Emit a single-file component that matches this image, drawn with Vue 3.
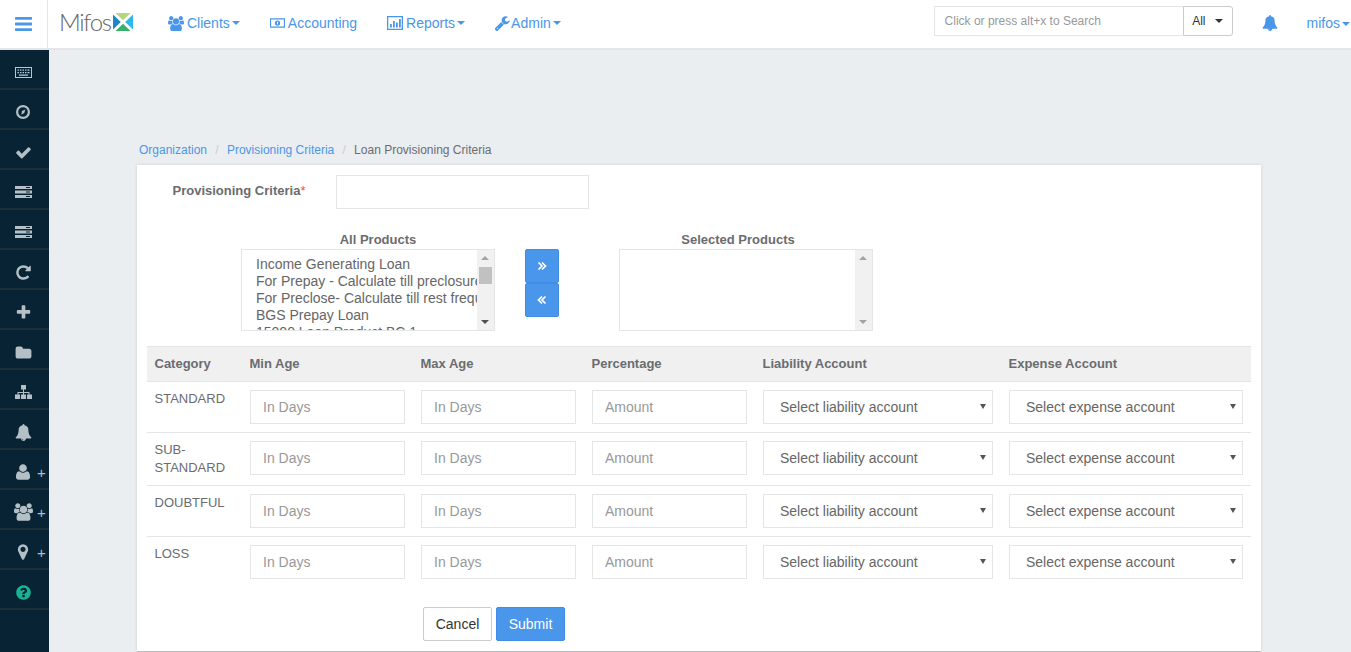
<script setup>
const P = {
  bars: 'M1664 1344v128q0 26-19 45t-45 19H192q-26 0-45-19t-19-45v-128q0-26 19-45t45-19h1408q26 0 45 19t19 45zm0-512v128q0 26-19 45t-45 19H192q-26 0-45-19t-19-45V832q0-26 19-45t45-19h1408q26 0 45 19t19 45zm0-512v128q0 26-19 45t-45 19H192q-26 0-45-19t-19-45V320q0-26 19-45t45-19h1408q26 0 45 19t19 45z',
  check: 'M1671 566q0 40-28 68l-724 724-136 136q-28 28-68 28t-68-28l-136-136-362-362q-28-28-28-68t28-68l136-136q28-28 68-28t68 28l294 295 656-657q28-28 68-28t68 28l136 136q28 28 28 68z',
  plus: 'M1600 736v192q0 40-28 68t-68 28h-416v416q0 40-28 68t-68 28H800q-40 0-68-28t-28-68v-416H288q-40 0-68-28t-28-68V736q0-40 28-68t68-28h416V224q0-40 28-68t68-28h192q40 0 68 28t28 68v416h416q40 0 68 28t28 68z',
  folder: 'M1728 608v704q0 92-66 158t-158 66H288q-92 0-158-66t-66-158V480q0-92 66-158t158-66h320q92 0 158 66t66 158v32h672q92 0 158 66t66 158z',
  bell: 'M912 1696q0-16-16-16-59 0-101.5-42.5T752 1536q0-16-16-16t-16 16q0 73 51.5 124.5T896 1712q16 0 16-16zm816-288q0 52-38 90t-90 38h-448q0 106-75 181t-181 75-181-75-75-181H192q-52 0-90-38t-38-90q50-42 91-88t85-119.5 74.5-158.5 50-206T384 576q0-152 117-282.5T808 135q-8-19-8-39 0-40 28-68t68-28 68 28 28 68q0 20-8 39 190 28 307 158.5T1408 576q0 139 19.5 260t50 206 74.5 158.5 85 119.5 91 88z',
  user: 'M1600 1405q0 120-73 189.5t-194 69.5H459q-121 0-194-69.5T192 1405q0-53 3.5-103.5t14-109T236 1084t43-97.5 62-81 85.5-53.5T538 832q9 0 42 21.5t74.5 48 108 48T896 971t133.5-21.5 108-48 74.5-48 42-21.5q61 0 111.5 20t85.5 53.5 62 81 43 97.5 26.5 108.5 14 109 3.5 103.5zm-320-893q0 159-112.5 271.5T896 896 624.5 783.5 512 512t112.5-271.5T896 128t271.5 112.5T1280 512z',
  users: 'M593 896q-162 5-265 128H194q-82 0-138-40.5T0 865q0-353 124-353 6 0 43.5 21t97.5 42.5T384 597q67 0 133-23-5 37-5 66 0 139 81 256zm1071 637q0 120-73 189.5t-194 69.5H523q-121 0-194-69.5T256 1533q0-53 3.5-103.5t14-109T300 1212t43-97.5 62-81 85.5-53.5T602 960q10 0 43 21.5t73 48 107 48 135 21.5 135-21.5 107-48 73-48 43-21.5q61 0 111.5 20t85.5 53.5 62 81 43 97.5 26.5 108.5 14 109 3.5 103.5zM640 256q0 106-75 181t-181 75-181-75-75-181 75-181T384 0t181 75 75 181zm704 384q0 159-112.5 271.5T960 1024 688.5 911.5 576 640t112.5-271.5T960 256t271.5 112.5T1344 640zm576 225q0 78-56 118.5t-138 40.5h-134q-103-123-265-128 81-117 81-256 0-29-5-66 66 23 133 23 59 0 119-21.5t97.5-42.5 43.5-21q124 0 124 353zm-128-609q0 106-75 181t-181 75-181-75-75-181 75-181 181-75 181 75 75 181z',
  wrench: 'M448 1472q0-26-19-45t-45-19-45 19-19 45 19 45 45 19 45-19 19-45zm644-420l-682 682q-37 37-90 37-52 0-91-37l-106-108q-38-36-38-90 0-53 38-91l681-681q39 98 114.5 173.5T1092 1052zm634-435q0 39-23 106-47 134-164.5 217.5T1280 1024q-185 0-316.5-131.5T832 576t131.5-316.5T1280 128q58 0 121.5 16.5T1509 191q16 11 16 28t-16 28l-293 169v224l193 107q5-3 79-48.5t135.5-81 70.5-35.5q15 0 23.5 10t8.5 25z',
  repeat: 'M1664 256v448q0 26-19 45t-45 19h-448q-42 0-59-40-17-39 14-69l138-138q-148-137-349-137-104 0-198.5 40.5T534 534 425.5 697.5 385 896t40.5 198.5T534 1258t163.5 108.5T896 1407q119 0 225-52t179-147q7-10 23-12 15 0 25 9l137 138q9 8 9.5 20.5t-7.5 22.5q-109 132-264 204.5T896 1664q-156 0-298-61t-245-164-164-245-61-298 61-298 164-245 245-164 298-61q147 0 284.5 55.5T1425 340l130-129q29-31 70-14 39 17 39 59z',
  marker: 'M1152 640q0-106-75-181t-181-75-181 75-75 181 75 181 181 75 181-75 75-181zm256 0q0 109-33 179l-364 774q-16 33-47.5 52t-67.5 19-67.5-19-46.5-52L417 819q-33-70-33-179 0-212 150-362t362-150 362 150 150 362z',
  question: 'M1024 1376v-192q0-14-9-23t-23-9H800q-14 0-23 9t-9 23v192q0 14 9 23t23 9h192q14 0 23-9t9-23zm256-672q0-88-55.5-163T1086 425t-170-41q-243 0-371 213-15 24 8 42l132 100q7 6 19 6 16 0 25-12 53-68 86-92 34-24 86-24 48 0 85.5 26t37.5 59q0 38-20 61t-68 45q-63 28-115.5 86.5T768 1020v36q0 14 9 23t23 9h192q14 0 23-9t9-23q0-19 21.5-49.5T1100 957q32-18 49-28.5t46-35 44.5-48 28-60.5 12.5-81zm384 192q0 209-103 385.5T1281.5 1561 896 1664t-385.5-103T231 1281.5 128 896t103-385.5T510.5 231 896 128t385.5 103T1561 510.5 1664 896z',
  keyboard: 'M0 0h17v11H0zM1 1v9h15V1zM2.500 2.500h1.500v1.200h-1.500zM5 2.500h1.500v1.200H5zM7.500 2.500H9v1.200H7.500zM10 2.500h1.500v1.200H10zM12.500 2.500h2v1.200h-2zM2.500 5h1.500v1.200h-1.500zM5 5h1.500v1.200H5zM7.500 5H9v1.200H7.500zM10 5h1.500v1.200H10zM12.500 5h2v1.200h-2zM4 7.500h9v1.200H4z',
  server: 'M0 0h17v3H0zM11 1v1h4V1zM0 4.500h17v3H0zM11 5.500v1h4v-1zM0 9h17v3H0zM11 10v1h4v-1z',
  compass: 'M7 0a7 7 0 1 0 0 14A7 7 0 0 0 7 0zM7 2.200a4.800 4.800 0 1 1 0 9.600 4.800 4.800 0 0 1 0-9.600zM9.400 4.400L8.200 8 5.400 9.800 5.900 6z',
  sitemap: 'M6 0h5v4.500H6zM8 4.500h1V7h5.500v2.500h-1V8H9v1.500H8V8H3.500v1.500h-1V7H8zM0 9.500h5V14H0zM6 9.500h5V14H6zM12 9.500h5V14h-5z',
  money: 'M0 0h16v10H0zM1.200 1.200v7.600h13.600V1.200zM8 2.200a2.800 2.800 0 1 1 0 5.600 2.800 2.800 0 0 1 0-5.600zM7.400 3.600v2.800h1.200V3.600z',
  chart: 'M0 0h16v14H0zM1.300 1.300v11.400h13.400V1.300zM3 8h1.800v3.500H3zM6 5h1.800v6.500H6zM9 6.500h1.800v5H9zM12 3h1.800v8.500H12z',
}
const fa = '0 0 1792 1792'
const side = [
  { p: P.keyboard, vb: '0 0 17 11', w: 17, h: 11, tint: true },
  { p: P.compass, vb: '0 0 14 14', w: 14, h: 14 },
  { p: P.check, vb: fa, w: 17, h: 17 },
  { p: P.server, vb: '0 0 17 12', w: 17, h: 12 },
  { p: P.server, vb: '0 0 17 12', w: 17, h: 12 },
  { p: P.repeat, vb: fa, w: 17, h: 17 },
  { p: P.plus, vb: fa, w: 17, h: 17 },
  { p: P.folder, vb: fa, w: 17, h: 17 },
  { p: P.sitemap, vb: '0 0 17 14', w: 17, h: 14 },
  { p: P.bell, vb: fa, w: 17, h: 17 },
  { p: P.user, vb: fa, w: 18, h: 18, more: true },
  { p: P.users, vb: '0 0 1920 1792', w: 19, h: 18, more: true },
  { p: P.marker, vb: fa, w: 18, h: 18, more: true },
  { p: P.question, vb: fa, w: 17, h: 17, help: true },
]
const nav = [
  { label: 'Clients', p: P.users, vb: '0 0 1920 1792', w: 16, h: 15, caret: true },
  { label: 'Accounting', p: P.money, vb: '0 0 16 10', w: 15, h: 10 },
  { label: 'Reports', p: P.chart, vb: '0 0 16 14', w: 16, h: 14, caret: true },
  { label: 'Admin', p: P.wrench, vb: '100 100 1664 1664', w: 15, h: 15, caret: true, tight: true },
]
const products = [
  'Income Generating Loan',
  'For Prepay - Calculate till preclosure date',
  'For Preclose- Calculate till rest frequency date',
  'BGS Prepay Loan',
  '15000 Loan Product BC 1',
]
const rows = ['STANDARD', 'SUB-STANDARD', 'DOUBTFUL', 'LOSS']
const heads = ['Category', 'Min Age', 'Max Age', 'Percentage', 'Liability Account', 'Expense Account']
</script>

<template>
  <div class="page">
    <header class="topbar">
      <div class="burger">
        <svg viewBox="128 256 1536 1280" preserveAspectRatio="none"><path :d="P.bars" /></svg>
      </div>
      <div class="logo">
        <span class="logo-text">Mifos</span>
        <svg class="logo-mark" width="20" height="18" viewBox="0 0 20 18">
          <polygon points="2.500,0 17.500,0 10,7.200" fill="#b3d77e" />
          <polygon points="0,1.500 0,16.500 7.800,9" fill="#1f86c9" />
          <polygon points="20,1.500 20,16.500 12.200,9" fill="#2cb7ee" />
          <polygon points="2.500,18 17.500,18 10,10.800" fill="#37b26c" />
        </svg>
      </div>
      <nav class="nav">
        <a v-for="n in nav" :key="n.label" class="nav-link">
          <svg :class="{ tight: n.tight }" :width="n.w" :height="n.h" :viewBox="n.vb"><path :d="n.p" fill-rule="evenodd" /></svg>
          <span>{{ n.label }}</span>
          <i v-if="n.caret" class="caret"></i>
        </a>
      </nav>
      <div class="search">
        <input class="search-input" placeholder="Click or press alt+x to Search" />
        <button class="search-btn">All <i class="caret dark"></i></button>
      </div>
      <svg class="top-bell" width="16" height="16" viewBox="0 0 1792 1792"><path :d="P.bell" /></svg>
      <a class="user-link">mifos<i class="caret"></i></a>
    </header>

    <div class="body">
      <aside class="sidebar">
        <div v-for="(s, i) in side" :key="i" class="side-item">
          <svg :class="{ help: s.help, tint: s.tint }" :width="s.w" :height="s.h" :viewBox="s.vb"><path :d="s.p" fill-rule="evenodd" /></svg>
          <span v-if="s.more" class="side-plus">+</span>
        </div>
      </aside>

      <main class="main">
        <ol class="crumbs">
          <li><a>Organization</a></li>
          <li class="sep">/</li>
          <li><a>Provisioning Criteria</a></li>
          <li class="sep">/</li>
          <li>Loan Provisioning Criteria</li>
        </ol>

        <section class="card">
          <div class="criteria">
            <label class="criteria-label">Provisioning Criteria<span class="req">*</span></label>
            <input class="field criteria-input" />
          </div>

          <div class="products">
            <div class="prod-col">
              <div class="prod-title title-all">All Products</div>
              <div class="listbox">
                <ul class="list">
                  <li v-for="p in products" :key="p">{{ p }}</li>
                </ul>
                <div class="scroll">
                  <i class="arrow up"></i>
                  <b class="thumb"></b>
                  <i class="arrow down dark-arrow"></i>
                </div>
              </div>
            </div>
            <div class="move">
              <button class="move-btn">
                <svg width="10" height="10" viewBox="0 0 10 10"><path d="M1.500 1.500L5 5 1.500 8.500M5 1.500L8.500 5 5 8.500" /></svg>
              </button>
              <button class="move-btn">
                <svg width="10" height="10" viewBox="0 0 10 10"><path d="M5 1.500L1.500 5 5 8.500M8.500 1.500L5 5l3.500 3.500" /></svg>
              </button>
            </div>
            <div class="prod-col">
              <div class="prod-title title-sel">Selected Products</div>
              <div class="listbox">
                <div class="list"></div>
                <div class="scroll">
                  <i class="arrow up"></i>
                  <i class="arrow down"></i>
                </div>
              </div>
            </div>
          </div>

          <table class="grid">
            <colgroup>
              <col class="c0" /><col class="c1" /><col class="c1" /><col class="c1" /><col class="c2" /><col class="c3" />
            </colgroup>
            <thead>
              <tr><th v-for="h in heads" :key="h">{{ h }}</th></tr>
            </thead>
            <tbody>
              <tr v-for="r in rows" :key="r">
                <td class="cat">{{ r }}</td>
                <td><input class="field" placeholder="In Days" /></td>
                <td><input class="field" placeholder="In Days" /></td>
                <td><input class="field" placeholder="Amount" /></td>
                <td>
                  <div class="select"><select class="field sel"><option>Select liability account</option></select></div>
                </td>
                <td>
                  <div class="select"><select class="field sel"><option>Select expense account</option></select></div>
                </td>
              </tr>
            </tbody>
          </table>

          <div class="actions">
            <button class="btn">Cancel</button>
            <button class="btn primary">Submit</button>
          </div>
        </section>
      </main>
    </div>
  </div>
</template>

<style>
html, body { margin: 0; overflow: hidden; }
</style>

<style scoped>
.page {
  width: 1351px;
  height: 652px;
  overflow: hidden;
  font-family: "Liberation Sans", Arial, sans-serif;
  font-size: 14px;
  color: #6a6c6f;
  background: #ebeef1;
}
.topbar {
  display: flex;
  align-items: center;
  height: 48px;
  background: #fff;
  border-bottom: 2px solid #e4e5e7;
}
.burger {
  width: 47px;
  height: 48px;
  border-right: 1px solid #e4e5e7;
  display: flex;
  align-items: center;
  justify-content: center;
}
.burger svg { width: 17px; height: 14px; fill: #4a96ea; margin-top: -1px; }
.logo {
  display: flex;
  align-items: center;
  margin-left: 11px;
  width: 74px;
  margin-top: -4px;
}
.logo-text {
  font-family: Lato, sans-serif;
  font-weight: 300;
  font-size: 24px;
  color: #666;
  letter-spacing: -1.3px;
  line-height: 28px;
}
.logo-mark { margin-left: auto; }
.nav {
  display: flex;
  align-items: center;
  gap: 30px;
  margin-left: 35px;
  margin-top: -2px;
}
.nav-link {
  display: flex;
  align-items: center;
  gap: 3px;
  color: #4a96ea;
}
.nav-link svg { fill: #4a96ea; }
.nav-link svg.tight { margin-right: -2px; }
.caret {
  display: inline-block;
  width: 0;
  height: 0;
  border-left: 4px solid transparent;
  border-right: 4px solid transparent;
  border-top: 4px solid #4a96ea;
  margin-left: -1px;
}
.caret.dark { border-top-color: #333; margin-left: 6px; vertical-align: 2px; }
.search {
  display: flex;
  margin-left: auto;
  height: 30px;
  margin-right: 29px;
  margin-bottom: 6px;
}
.search-input {
  box-sizing: border-box;
  width: 249px;
  height: 30px;
  padding: 0 10px;
  border: 1px solid #e4e5e7;
  border-right: 0;
  font: 12px "Liberation Sans", Arial, sans-serif;
  outline: none;
}
.search-input::placeholder { color: #999; }
.search-btn {
  box-sizing: border-box;
  width: 50px;
  height: 30px;
  border: 1px solid #ccc;
  border-radius: 0 3px 3px 0;
  background: #fff;
  color: #333;
  font: 12px "Liberation Sans", Arial, sans-serif;
  padding: 0;
}
.top-bell { fill: #4a96ea; margin-right: 29px; margin-bottom: 3px; }
.user-link { color: #4a96ea; margin-right: 1px; margin-bottom: 2px; white-space: nowrap; }
.user-link .caret { margin-left: 2px; vertical-align: 2px; }

.body { display: flex; height: 602px; }
.sidebar {
  width: 49px;
  flex: none;
  background: #082333;
}
.side-item {
  box-sizing: border-box;
  height: 40px;
  display: flex;
  align-items: center;
  justify-content: center;
  position: relative;
  padding: 6px 3px 0 0;
  border-bottom: 2px solid #1a2f3a;
}
.side-item svg { fill: #b4c0c6; }
.side-item svg.tint { fill: #a9cbdc; }
.side-item svg.help { fill: #19b394; }
.side-plus {
  position: absolute;
  left: 37px;
  top: 14px;
  font-size: 15px;
  line-height: 18px;
  color: #a9c3d2;
}
.main { flex: 1; padding: 92px 0 0 88px; min-width: 0; }
.crumbs {
  display: flex;
  list-style: none;
  margin: 0 0 0 2px;
  padding: 0;
  font-size: 12px;
  line-height: 16px;
  height: 23px;
  color: #6a6c6f;
}
.crumbs a { color: #4a96ea; }
.crumbs .sep { color: #ccc; padding: 0 8.25px; }
.card {
  box-sizing: border-box;
  width: 1124px;
  height: 487px;
  background: #fff;
  padding: 10px 10px 0;
  border-bottom: 1px solid #bbb;
  box-shadow: 0 0 3px rgba(0, 0, 0, 0.12);
}
.criteria { display: flex; align-items: flex-start; }
.criteria-label {
  width: 189px;
  box-sizing: border-box;
  padding: 8px 0 0 25.5px;
  font-size: 13px;
  font-weight: 700;
  line-height: 16px;
}
.req { color: #e74c3c; font-weight: 400; }
.field {
  box-sizing: border-box;
  width: 100%;
  height: 34px;
  padding: 0 12px;
  border: 1px solid #e4e5e7;
  border-radius: 0;
  background: #fff;
  font: 14px "Liberation Sans", Arial, sans-serif;
  color: #666;
  outline: none;
}
.field::placeholder { color: #999; }
.criteria-input { width: 253px; }

.products {
  display: flex;
  margin-top: 22px;
  padding-left: 94px;
  height: 100px;
}
.prod-col { width: 254px; }
.prod-title {
  font-size: 13px;
  font-weight: 700;
  line-height: 16px;
  padding-top: 1px;
  margin-bottom: 1px;
  text-align: center;
}
.title-all { padding-left: 20px; }
.title-sel { padding-right: 16px; }
.listbox {
  box-sizing: border-box;
  width: 254px;
  height: 82px;
  border: 1px solid #e4e5e7;
  display: flex;
  overflow: hidden;
}
.list {
  flex: 1;
  min-width: 0;
  margin: 0;
  padding: 6px 0 0 14px;
  list-style: none;
  font-size: 14px;
  line-height: 17px;
  color: #666;
  white-space: nowrap;
  overflow: hidden;
}
.scroll {
  width: 17px;
  flex: none;
  background: #f1f1f1;
  position: relative;
}
.arrow {
  width: 0;
  height: 0;
  left: 4px;
  border-left: 4px solid transparent;
  border-right: 4px solid transparent;
  position: absolute;
}
.arrow.up { top: 6px; border-bottom: 4px solid #a3a3a3; }
.arrow.down { bottom: 6px; border-top: 4px solid #a3a3a3; }
.arrow.dark-arrow { border-top-color: #505050; }
.thumb {
  position: absolute;
  top: 17px;
  left: 2px;
  width: 13px;
  height: 17px;
  background: #c1c1c1;
}
.move {
  width: 34px;
  margin: 18px 60px 0 30px;
  display: flex;
  flex-direction: column;
}
.move-btn {
  box-sizing: border-box;
  width: 34px;
  height: 34px;
  padding: 0;
  background: #4a96ea;
  border: 1px solid #3f8de6;
  border-radius: 2px;
  display: flex;
  align-items: center;
  justify-content: center;
}
.move-btn svg { fill: none; stroke: #fff; stroke-width: 1.7; }

.grid {
  width: 1104px;
  margin-top: 15px;
  border-collapse: separate;
  border-spacing: 0;
  table-layout: fixed;
}
.c0 { width: 95px; }
.c1 { width: 171px; }
.c2 { width: 246px; }
.c3 { width: 250px; }
.grid th {
  box-sizing: border-box;
  height: 36px;
  padding: 0 8px 0 7.5px;
  background: #f0f0f0;
  border-top: 1px solid #e4e5e7;
  border-bottom: 1px solid #e4e5e7;
  text-align: left;
  font-size: 13px;
  font-weight: 700;
  line-height: 18px;
}
.grid td {
  padding: 8px;
  vertical-align: top;
  line-height: 18.2px;
  border-top: 1px solid #e4e5e7;
}
.grid td.cat { font-size: 13px; padding-left: 7.5px; }
.grid tbody tr:first-child td { border-top: 0; }
.select { position: relative; }
.select::after {
  content: "";
  position: absolute;
  right: 7px;
  top: 14px;
  border-left: 3px solid transparent;
  border-right: 3px solid transparent;
  border-top: 5px solid #555;
}
.sel {
  appearance: none;
  -webkit-appearance: none;
  padding-left: 16px;
}
.actions {
  display: flex;
  gap: 4px;
  margin-top: 20px;
  padding-left: 276px;
}
.btn {
  box-sizing: border-box;
  width: 69px;
  height: 34px;
  padding: 0;
  border: 1px solid #ccc;
  border-radius: 2px;
  background: #fff;
  color: #333;
  font: 14px "Liberation Sans", Arial, sans-serif;
}
.btn.primary {
  background: #4a96ea;
  border-color: #3f8de6;
  color: #fff;
}
</style>
